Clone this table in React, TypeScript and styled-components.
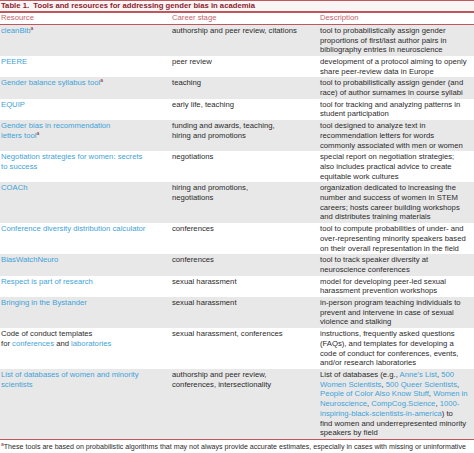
import React from 'react';
import styled, { createGlobalStyle } from 'styled-components';

const RED = '#c0575d';
const LINK = '#3fa3d8';

const GlobalStyle = createGlobalStyle`
    html, body {
        margin: 0;
        padding: 0;
        background: #ffffff;
        overflow: hidden;
    }
    body {
        font-family: "Liberation Sans", Arial, sans-serif;
        font-size: 7.7px;
        color: #2b2b2b;
    }
`;

const Page = styled.div`
    width: 474px;
    height: 453px;
    overflow: hidden;
`;

const Caption = styled.div`
    border-top: 1px solid ${ RED };
    border-bottom: 2px solid ${ RED };
    background: #faf5f5;
    padding-left: 1px;
    line-height: 10.3px;
    font-weight: 700;
    color: #8b2330;
    white-space: nowrap;
`;

const Grid = styled.div<{ $head?: boolean; $shade?: boolean }>`
    display: grid;
    grid-template-columns: 172px 148px 1fr;
    padding: ${ ({ $head }) => ($head ? '0' : '1px 0') };
    line-height: ${ ({ $head }) => ($head ? '10.5px' : '9.7px') };
    background: ${ ({ $shade }) => ($shade ? '#e8e8e8' : '#ffffff') };
    color: ${ ({ $head }) => ($head ? '#c4656b' : 'inherit') };
    border-bottom: ${ ({ $head }) => ($head ? `1.5px solid ${ RED }` : 'none') };
`;

const Cell = styled.div`
    white-space: nowrap;
    &:first-child {
        padding-left: 1px;
    }
`;

const Line = styled.div`
    white-space: nowrap;
`;

const A = styled.span`
    color: ${ LINK };
`;

const Sup = styled.sup`
    font-size: 5px;
    line-height: 0;
    color: #8b2330;
    vertical-align: 3px;
`;

const Body = styled.div`
    border-bottom: 1px solid ${ RED };
`;

const Footnote = styled.div`
    padding: 2px 0 0 1px;
    font-size: 7.1px;
    line-height: 10px;
    white-space: nowrap;
`;

type Row = { res: React.ReactNode[]; stage: React.ReactNode[]; desc: React.ReactNode[] };

const rows: Row[] = [
    {
        res: [<><A>cleanBib</A><Sup>a</Sup></>],
        stage: ['authorship and peer review, citations'],
        desc: ['tool to probabilistically assign gender', 'proportions of first/last author pairs in', 'bibliography entries in neuroscience'],
    },
    {
        res: [<A>PEERE</A>],
        stage: ['peer review'],
        desc: ['development of a protocol aiming to openly', 'share peer-review data in Europe'],
    },
    {
        res: [<><A>Gender balance syllabus tool</A><Sup>a</Sup></>],
        stage: ['teaching'],
        desc: ['tool to probabilistically assign gender (and', 'race) of author surnames in course syllabi'],
    },
    {
        res: [<A>EQUIP</A>],
        stage: ['early life, teaching'],
        desc: ['tool for tracking and analyzing patterns in', 'student participation'],
    },
    {
        res: [<A>Gender bias in recommendation</A>, <><A>letters tool</A><Sup>a</Sup></>],
        stage: ['funding and awards, teaching,', 'hiring and promotions'],
        desc: ['tool designed to analyze text in', 'recommendation letters for words', 'commonly associated with men or women'],
    },
    {
        res: [<A>Negotiation strategies for women: secrets</A>, <A>to success</A>],
        stage: ['negotiations'],
        desc: ['special report on negotiation strategies;', 'also includes practical advice to create', 'equitable work cultures'],
    },
    {
        res: [<A>COACh</A>],
        stage: ['hiring and promotions,', 'negotiations'],
        desc: ['organization dedicated to increasing the', 'number and success of women in STEM', 'careers; hosts career building workshops', 'and distributes training materials'],
    },
    {
        res: [<A>Conference diversity distribution calculator</A>],
        stage: ['conferences'],
        desc: ['tool to compute probabilities of under- and', 'over-representing minority speakers based', 'on their overall representation in the field'],
    },
    {
        res: [<A>BiasWatchNeuro</A>],
        stage: ['conferences'],
        desc: ['tool to track speaker diversity at', 'neuroscience conferences'],
    },
    {
        res: [<A>Respect is part of research</A>],
        stage: ['sexual harassment'],
        desc: ['model for developing peer-led sexual', 'harassment prevention workshops'],
    },
    {
        res: [<A>Bringing in the Bystander</A>],
        stage: ['sexual harassment'],
        desc: ['in-person program teaching individuals to', 'prevent and intervene in case of sexual', 'violence and stalking'],
    },
    {
        res: ['Code of conduct templates', <>for <A>conferences</A> and <A>laboratories</A></>],
        stage: ['sexual harassment, conferences'],
        desc: ['instructions, frequently asked questions', '(FAQs), and templates for developing a', 'code of conduct for conferences, events,', 'and/or research laboratories'],
    },
    {
        res: [<A>List of databases of women and minority</A>, <A>scientists</A>],
        stage: ['authorship and peer review,', 'conferences, intersectionality'],
        desc: [
            <>List of databases (e.g., <A>Anne's List</A>, <A>500</A></>,
            <><A>Women Scientists</A>, <A>500 Queer Scientists</A>,</>,
            <><A>People of Color Also Know Stuff</A>, <A>Women in</A></>,
            <><A>Neuroscience</A>, <A>CompCog.Science</A>, <A>1000-</A></>,
            <><A>inspiring-black-scientists-in-america</A>) to</>,
            'find women and underrepresented minority',
            'speakers by field',
        ],
    },
];

function Lines({ items }: { items: React.ReactNode[] }) {
    return (
        <Cell>
            { items.map((item, i) => <Line key={ i }>{ item }</Line>) }
        </Cell>
    );
}

export default function App() {
    return (
        <Page>
            <GlobalStyle />
            <Caption>Table 1.&nbsp; Tools and resources for addressing gender bias in academia</Caption>
            <Grid $head>
                <Cell>Resource</Cell>
                <Cell>Career stage</Cell>
                <Cell>Description</Cell>
            </Grid>
            <Body>
                {
                    rows.map((row, i) => (
                        <Grid key={ i } $shade={ i % 2 === 0 }>
                            <Lines items={ row.res } />
                            <Lines items={ row.stage } />
                            <Lines items={ row.desc } />
                        </Grid>
                    ))
                }
            </Body>
            <Footnote>
                <Sup>a</Sup>These tools are based on probabilistic algorithms that may not always provide accurate estimates, especially in cases with missing or uninformative
            </Footnote>
        </Page>
    );
}
